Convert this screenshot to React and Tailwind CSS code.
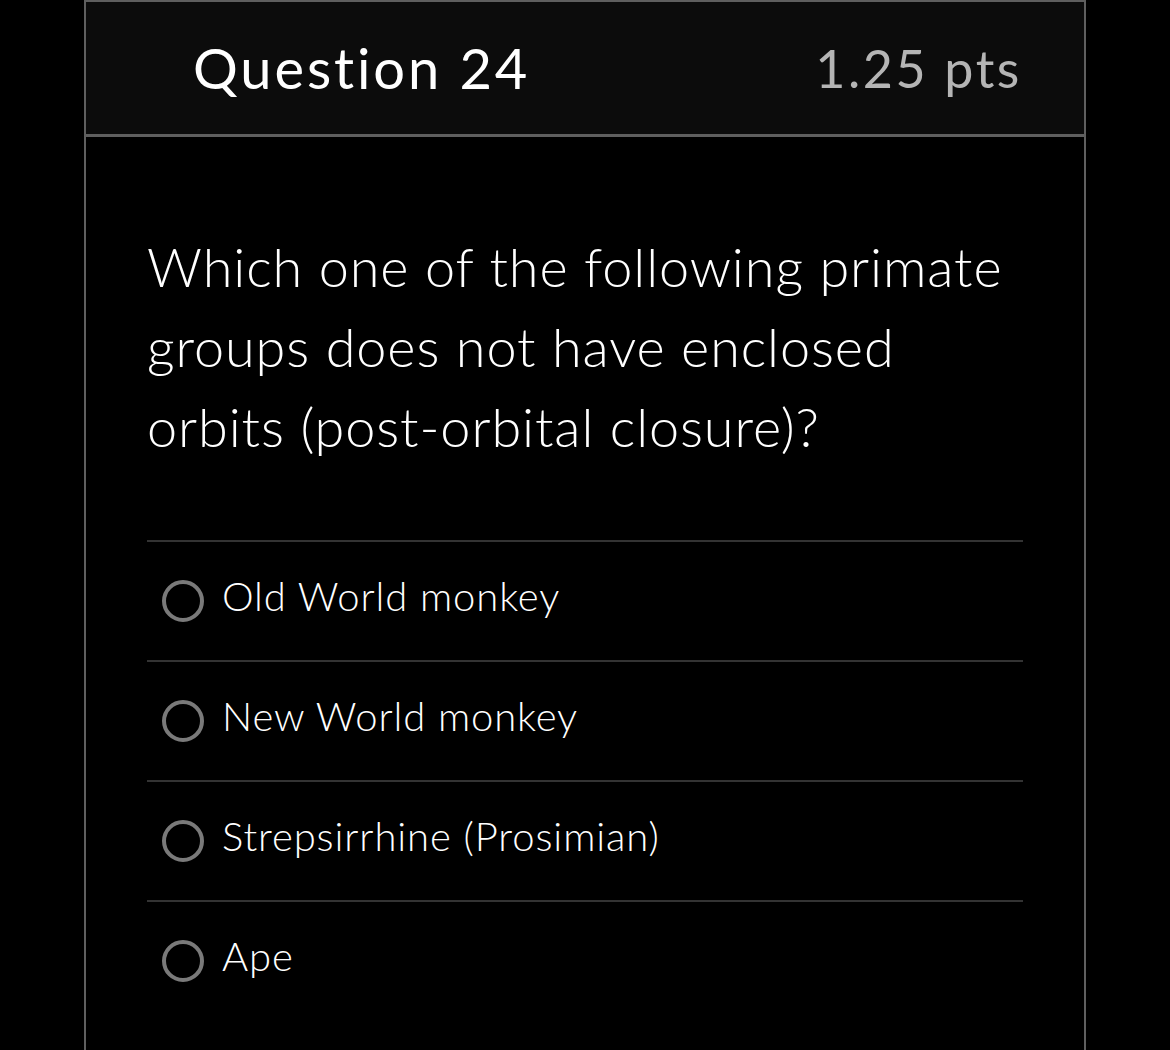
const options = [
  'Old World monkey',
  'New World monkey',
  'Strepsirrhine (Prosimian)',
  'Ape',
]

const App = () => {
  return (
    <div className="min-h-screen bg-black font-['Lato','Liberation_Sans',sans-serif] overflow-hidden">
      <div className="ml-[84px] w-[1002px] border-2 border-b-0 border-[#5f5f5f] h-[1060px]">
        {/* Header */}
        <div className="h-[135px] bg-[#0c0c0c] border-b-[3px] border-[#5f5f5f] flex items-center justify-between pl-[107px] pr-[62px]">
          <h2 className="text-[56px] text-white font-normal leading-none tracking-[2.9px]">Question 24</h2>
          <span className="text-[52px] text-[#b5b5b5] leading-none tracking-[2.6px]">1.25 pts</span>
        </div>

        {/* Body */}
        <div className="px-[61px] pt-[90px]">
          <p className="text-[54px] leading-[80px] text-white font-light tracking-[0.9px]">
            Which one of the following primate groups does not have enclosed orbits (post-orbital closure)?
          </p>

          <div className="mt-[73px]">
            {options.map(option => (
              <div key={option} className="border-t-2 border-[#333333] h-[120px] flex items-center">
                <span className="ml-[15px] w-[42px] h-[42px] rounded-full border-4 border-[#7a7a7a] shrink-0"></span>
                <span className="ml-[18px] pb-[10px] text-[40px] text-white font-light leading-none tracking-[0.9px]">{option}</span>
              </div>
            ))}
          </div>
        </div>
      </div>
    </div>
  )
}

export default App
